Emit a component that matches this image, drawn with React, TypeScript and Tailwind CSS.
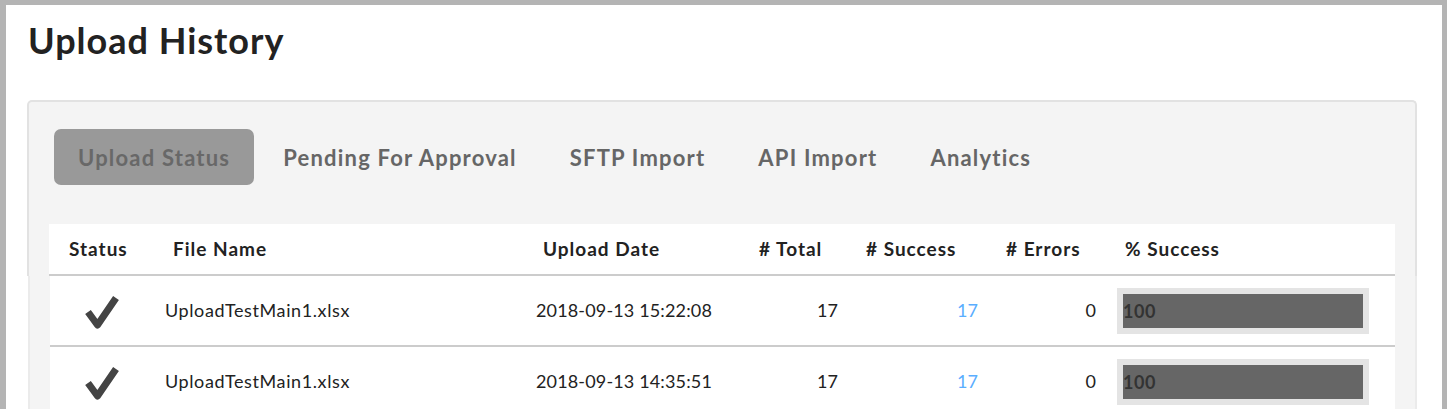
import React from "react";

type Upload = {
  fileName: string;
  uploadedAt: string;
  total: number;
  success: number;
  errors: number;
};

const TABS = ["Upload Status", "Pending For Approval", "SFTP Import", "API Import", "Analytics"];

const UPLOADS: Upload[] = [
  { fileName: "UploadTestMain1.xlsx", uploadedAt: "2018-09-13 15:22:08", total: 17, success: 17, errors: 0 },
  { fileName: "UploadTestMain1.xlsx", uploadedAt: "2018-09-13 14:35:51", total: 17, success: 17, errors: 0 },
];

const COLS = "grid grid-cols-[104px_370px_217px_109px_140px_118px_1fr]";

const CheckIcon = () => (
  <svg width="34" height="36" viewBox="0 0 34 36" className="blur-[0.5px]">
    <path d="M3 18 L12.5 31 L31 4" fill="none" stroke="#444" strokeWidth="7" strokeLinejoin="round" />
  </svg>
);

const SuccessBar = ({ pct }: { pct: number }) => (
  <div className="w-[252px] h-[46px] bg-[#e4e4e4] p-[6px]">
    <div className="h-full bg-[#666] flex items-center" style={{ width: `${pct}%` }}>
      <span className="text-[18px] font-bold text-[#333] leading-none tracking-[0.5px]">{pct}</span>
    </div>
  </div>
);

const App: React.FC = () => {
  return (
    <div
      className="min-h-[409px] bg-[#b4b4b4] pt-[5px] pl-[6px] pr-[5px]"
      style={{ fontFamily: "Lato, 'Open Sans', sans-serif" }}
    >
      <div className="bg-white min-h-[404px] pl-[21px] pr-[25px]">
        <h1 className="pt-[15px] pl-[1px] text-[36px] leading-[40px] font-bold tracking-[1px] text-[#222]">
          Upload History
        </h1>

        <div className="mt-[40px]">
          {/* tabs + table header */}
          <div className="bg-[#f4f4f4] border-2 border-b-0 border-[#e2e2e2] rounded-t-[5px] px-5 pt-[27px]">
            <div className="flex gap-[5px] pl-[5px]">
              {TABS.map((tab, i) => (
                <div
                  key={tab}
                  className={`h-[56px] px-6 flex items-center rounded-[7px] text-[22px] font-bold tracking-[1.2px] ${
                    i === 0 ? "bg-[#999] text-[#686868]" : "text-[#666]"
                  }`}
                >
                  {tab}
                </div>
              ))}
            </div>

            <div className={`${COLS} mt-[39px] h-[52px] bg-white border-b-2 border-[#ccc] items-center text-[19px] font-bold tracking-[1px] text-[#222]`}>
              <div className="pl-5">Status</div>
              <div className="pl-5">File Name</div>
              <div className="pl-5">Upload Date</div>
              <div className="pl-[19px]"># Total</div>
              <div className="pl-[17px]"># Success</div>
              <div className="pl-[17px]"># Errors</div>
              <div className="pl-[18px]">% Success</div>
            </div>
          </div>

          {/* rows */}
          <div className="ml-[1px] bg-[#f4f4f4] border-x-2 border-[#ebebeb] px-5">
            {UPLOADS.map((u, i) => (
              <div
                key={i}
                className={`${COLS} h-[71px] bg-white border-b-2 border-[#ccc] items-center text-[18px] text-[#222]`}
              >
                <div className="flex justify-center pt-[2px]">
                  <CheckIcon />
                </div>
                <div className="pl-[11px] tracking-[0.6px]">{u.fileName}</div>
                <div className="pl-[12px] tracking-[0.15px]">{u.uploadedAt}</div>
                <div className="text-right pr-[12px]">{u.total}</div>
                <div className="text-right pr-[12px] text-[#5aaeff]">{u.success}</div>
                <div className="text-right pr-[12px]">{u.errors}</div>
                <div className="pl-[9px]">
                  <SuccessBar pct={Math.round((u.success / u.total) * 100)} />
                </div>
              </div>
            ))}
          </div>
        </div>
      </div>
    </div>
  );
};

export default App;
